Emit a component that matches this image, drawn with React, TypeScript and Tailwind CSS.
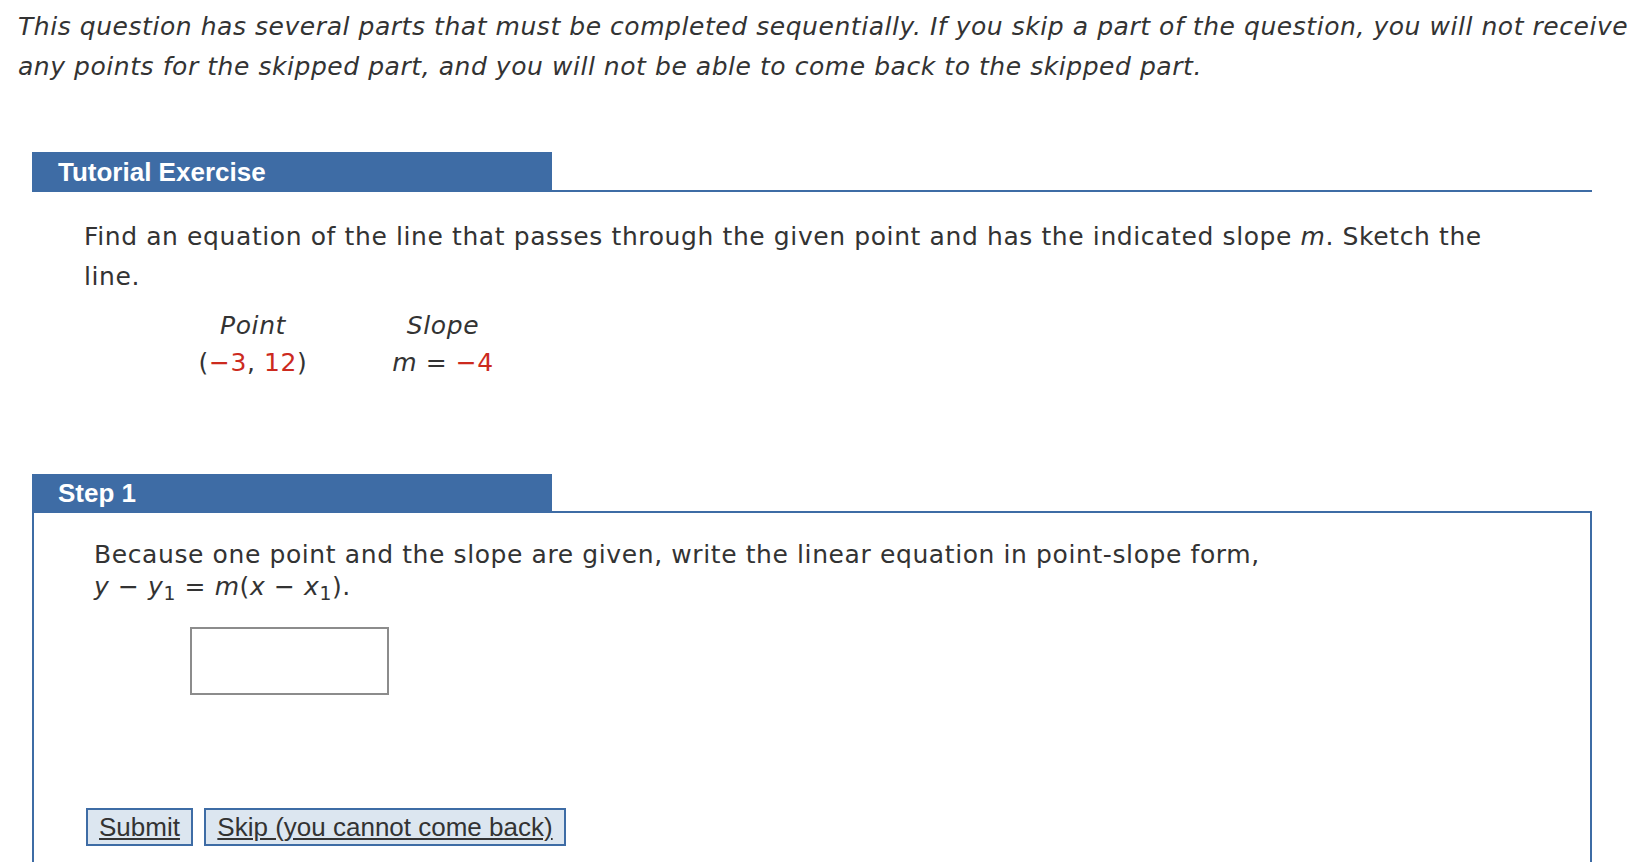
export default function App() {
  return (
    <div className="min-h-screen bg-white text-[#333] font-['DejaVu_Sans',Verdana,sans-serif]">
      {/* ---------------- NOTICE ---------------- */}
      <p className="pl-[18px] pr-[4px] pt-[7px] text-[25px] leading-[40px] italic tracking-[0.55px]">
        This question has several parts that must be completed sequentially. If you skip a part of the question, you will not receive any points for the skipped part, and you will not be able to come back to the skipped part.
      </p>

      <div className="ml-[32px] w-[1560px]">
        {/* ---------------- TUTORIAL HEADER ---------------- */}
        <div className="mt-[65px] flex h-[40px]">
          <div className="flex w-[520px] items-center bg-[#3e6ca5] pl-[26px] font-['Liberation_Sans',Arial,sans-serif] text-[26px] font-bold text-white">
            Tutorial Exercise
          </div>
          <div className="flex-1 border-b-2 border-[#3e6ca5]" />
        </div>

        <p className="mt-[25px] pl-[52px] pr-[68px] text-[25px] leading-[40px] tracking-[0.6px]">
          Find an equation of the line that passes through the given point and has the indicated slope <i>m</i>. Sketch the line.
        </p>

        {/* ---------------- POINT / SLOPE ---------------- */}
        <div className="mt-[10px] flex text-[25px] leading-[37px] tracking-[0.6px]">
          <div className="ml-[161px] w-[120px] text-center">
            <div className="italic">Point</div>
            <div>
              (<span className="text-[#cc2a1e]">−3</span>, <span className="text-[#cc2a1e]">12</span>)
            </div>
          </div>
          <div className="ml-[30px] w-[200px] text-center">
            <div className="italic">Slope</div>
            <div>
              <i>m</i> = <span className="text-[#cc2a1e]">−4</span>
            </div>
          </div>
        </div>

        {/* ---------------- STEP 1 ---------------- */}
        <div className="mt-[93px] flex h-[39px]">
          <div className="flex w-[520px] items-center bg-[#3e6ca5] pl-[26px] font-['Liberation_Sans',Arial,sans-serif] text-[26px] font-bold text-white">
            Step 1
          </div>
          <div className="flex-1 border-b-2 border-[#3e6ca5]" />
        </div>
        <div className="border-x-2 border-b-2 border-[#3e6ca5] pl-[52px] pt-[26px] pb-[40px]">
          <div className="pl-[8px] text-[25px] leading-[32px] tracking-[0.6px]">
            <div>Because one point and the slope are given, write the linear equation in point-slope form,</div>
            <div>
              <i>y</i> − <i>y</i><sub>1</sub> = <i>m</i>(<i>x</i> − <i>x</i><sub>1</sub>).
            </div>
          </div>

          <input
            type="text"
            className="mt-[24px] ml-[104px] block h-[68px] w-[199px] border-2 border-[#8c8c8c] bg-white"
          />

          <div className="mt-[113px] flex gap-[11px] font-['Liberation_Sans',Arial,sans-serif] text-[26px] text-[#333]">
            <button className="h-[38px] w-[107px] border-2 border-[#3e6ca5] bg-[#dce6f0] leading-none underline">
              Submit
            </button>
            <button className="h-[38px] w-[362px] border-2 border-[#3e6ca5] bg-[#dce6f0] leading-none underline">
              Skip (you cannot come back)
            </button>
          </div>
        </div>
      </div>
    </div>
  );
}
